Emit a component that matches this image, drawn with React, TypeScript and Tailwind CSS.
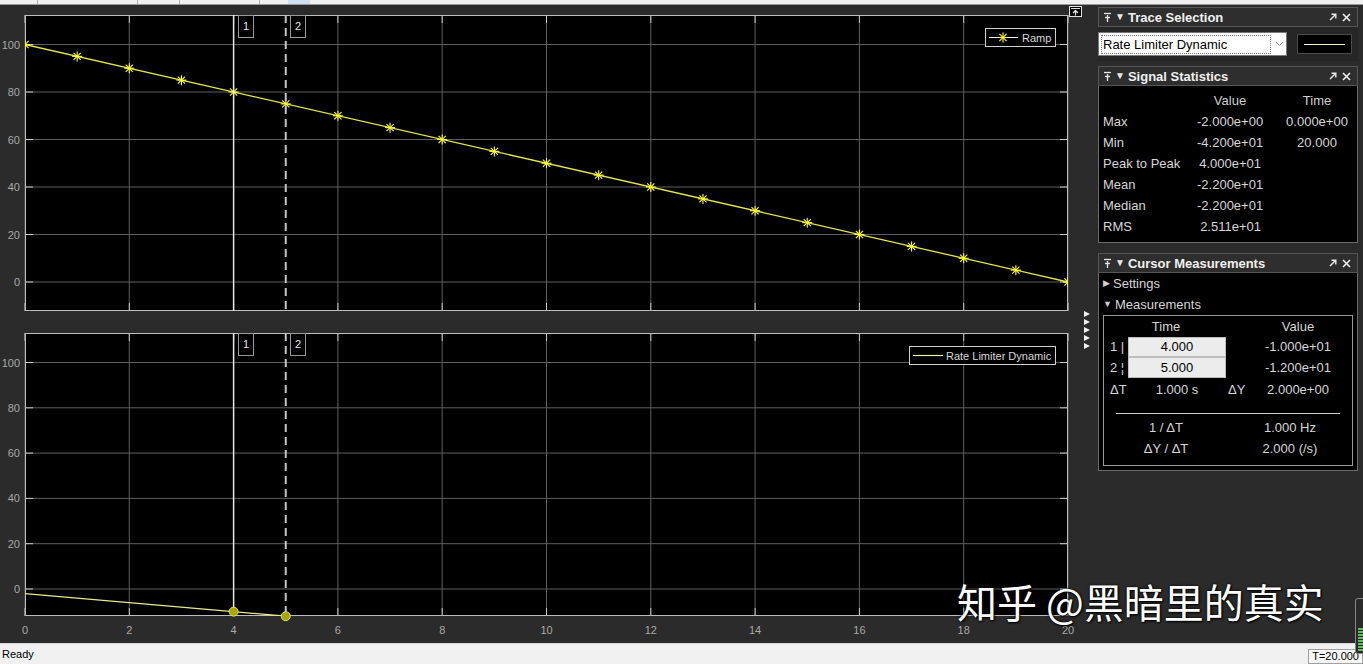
import type { ReactNode } from 'react';

const X0 = 25;
const X1 = 1068;
const xt = (t: number) => X0 + (t * (X1 - X0)) / 20;
const C1 = xt(4);
const C2 = xt(5);

interface PlotProps {
  id: string;
  vbTop: number;
  vbH: number;
  top: number;
  bottom: number;
  zeroY: number;
  scale: number;
  xLabels?: boolean;
  children: ReactNode;
}

function Asterisk({ x, y }: { x: number; y: number }) {
  const r = 5;
  const d = 3.6;
  return (
    <g stroke="#ffff33" strokeWidth={1.1}>
      <line x1={x - r} y1={y} x2={x + r} y2={y} />
      <line x1={x} y1={y - r} x2={x} y2={y + r} />
      <line x1={x - d} y1={y - d} x2={x + d} y2={y + d} />
      <line x1={x - d} y1={y + d} x2={x + d} y2={y - d} />
    </g>
  );
}

function Plot({ id, vbTop, vbH, top, bottom, zeroY, scale, xLabels, children }: PlotProps) {
  const yv = (v: number) => zeroY - v * scale;
  const yTicks = [0, 20, 40, 60, 80, 100];
  const xTicks = [0, 2, 4, 6, 8, 10, 12, 14, 16, 18, 20];
  return (
    <svg width={1082} height={vbH} viewBox={`0 ${vbTop} 1082 ${vbH}`} className="block">
      <defs>
        <clipPath id={id}>
          <rect x={X0} y={top} width={X1 - X0} height={bottom - top} />
        </clipPath>
      </defs>
      <rect x={X0} y={top} width={X1 - X0} height={bottom - top} fill="#000" />
      {/* grid */}
      {yTicks.map((v) => (
        <line key={'gy' + v} x1={X0} x2={X1} y1={yv(v)} y2={yv(v)} stroke="#5f5f5f" strokeWidth={1} />
      ))}
      {xTicks.map((t) => (
        <line key={'gx' + t} x1={xt(t)} x2={xt(t)} y1={top} y2={bottom} stroke="#5f5f5f" strokeWidth={1} />
      ))}
      {/* ticks */}
      {yTicks.map((v) => (
        <g key={'ty' + v} stroke="#c8c8c8">
          <line x1={X0} x2={X0 + 8} y1={yv(v)} y2={yv(v)} />
          <line x1={X1 - 8} x2={X1} y1={yv(v)} y2={yv(v)} />
        </g>
      ))}
      {xTicks.map((t) => (
        <g key={'tx' + t} stroke="#c8c8c8">
          <line x1={xt(t)} x2={xt(t)} y1={top} y2={top + 8} />
          <line x1={xt(t)} x2={xt(t)} y1={bottom - 8} y2={bottom} />
        </g>
      ))}
      <rect x={X0 + 0.5} y={top + 0.5} width={X1 - X0 - 1} height={bottom - top - 1} fill="none" stroke="#bdbdbd" strokeWidth={1} />
      {yTicks.map((v) => (
        <text key={'ly' + v} x={20} y={yv(v) + 4} textAnchor="end" fontSize={11} fill="#a9a9a9">
          {v}
        </text>
      ))}
      {xLabels &&
        xTicks.map((t) => (
          <text key={'lx' + t} x={xt(t)} y={bottom + 18} textAnchor="middle" fontSize={11} fill="#a9a9a9">
            {t}
          </text>
        ))}
      <g clipPath={`url(#${id})`}>{children}</g>
      {/* cursors */}
      <line x1={C1} x2={C1} y1={top} y2={bottom} stroke="#e6e6e6" strokeWidth={1.5} />
      <line x1={C2} x2={C2} y1={top} y2={bottom} stroke="#c4c4c4" strokeWidth={2} strokeDasharray="8 5" />
      <rect x={238.5} y={top + 0.5} width={15} height={22} fill="#000" stroke="#9a9a9a" />
      <text x={246} y={top + 15} textAnchor="middle" fontSize={11} fill="#e8e8e8">1</text>
      <rect x={290.5} y={top + 0.5} width={15} height={22} fill="#000" stroke="#9a9a9a" />
      <text x={298} y={top + 15} textAnchor="middle" fontSize={11} fill="#e8e8e8">2</text>
    </svg>
  );
}

function PinIcon() {
  return (
    <svg width="9" height="11" viewBox="0 0 9 11" className="block">
      <g stroke="#e8e8e8" strokeWidth="1.3" fill="none">
        <line x1="1" y1="1.5" x2="8" y2="1.5" />
        <line x1="4.5" y1="3" x2="4.5" y2="10" />
        <line x1="2" y1="5.5" x2="7" y2="5.5" />
      </g>
    </svg>
  );
}

function PanelHeader({ title }: { title: string }) {
  return (
    <div className="h-[20px] flex items-center border border-[#555] bg-[#2e2e2e] pl-[4px] pr-[6px]">
      <PinIcon />
      <span className="ml-[3px] text-[10px] text-[#e8e8e8] leading-none">▼</span>
      <span className="ml-[3px] text-[13px] font-bold text-[#f0f0f0] leading-none">{title}</span>
      <div className="ml-auto flex items-center gap-[5px] text-[#e8e8e8]">
        <svg width="8" height="8" viewBox="0 0 8 8" className="block">
          <g stroke="#e8e8e8" strokeWidth="1.4" fill="none">
            <line x1="1" y1="7" x2="6.5" y2="1.5" />
            <polyline points="2.5,1.2 6.8,1.2 6.8,5.5" />
          </g>
        </svg>
        <svg width="9" height="9" viewBox="0 0 9 9" className="block">
          <g stroke="#f0f0f0" strokeWidth="1.6">
            <line x1="1" y1="1" x2="8" y2="8" />
            <line x1="8" y1="1" x2="1" y2="8" />
          </g>
        </svg>
      </div>
    </div>
  );
}

const stats = [
  { label: 'Max', value: '-2.000e+00', time: '0.000e+00' },
  { label: 'Min', value: '-4.200e+01', time: '20.000' },
  { label: 'Peak to Peak', value: '4.000e+01', time: '' },
  { label: 'Mean', value: '-2.200e+01', time: '' },
  { label: 'Median', value: '-2.200e+01', time: '' },
  { label: 'RMS', value: '2.511e+01', time: '' },
];

export default function App() {
  return (
    <div className="w-[1363px] h-[664px] flex flex-col bg-[#2b2b2b] overflow-hidden relative font-['Liberation_Sans',Arial,sans-serif]">
      {/* toolbar remnant */}
      <div className="h-[5px] bg-[#f0f0f0] border-b border-[#9a9a9a] flex">
        <div className="w-[38px] border-r border-[#b0b0b0]" />
        <div className="w-[100px] border-r border-[#b0b0b0]" />
        <div className="w-[42px] border-r border-[#b0b0b0]" />
        <div className="w-[80px] border-r border-[#b0b0b0]" />
        <div className="w-[28px]" />
        <div className="w-[22px] bg-[#cfe0f3]" />
      </div>

      <div className="flex-1 flex">
        {/* plots */}
        <div className="w-[1082px] flex flex-col relative">
          <Plot id="c1" vbTop={5} vbH={317} top={15} bottom={311} zeroY={282} scale={2.375}>
            <line x1={xt(0)} y1={282 - 100 * 2.375} x2={xt(20)} y2={282} stroke="#e6e646" strokeWidth={1.3} />
            {Array.from({ length: 21 }, (_, i) => (
              <Asterisk key={i} x={xt(i)} y={282 - (100 - 5 * i) * 2.375} />
            ))}
          </Plot>
          <Plot id="c2" vbTop={322} vbH={321} top={333} bottom={616} zeroY={589} scale={2.265} xLabels>
            <line x1={xt(0)} y1={589 + 2 * 2.265} x2={xt(20)} y2={589 + 42 * 2.265} stroke="#eaea8a" strokeWidth={1.3} />
          </Plot>
          {/* legends and dots drawn on top */}
          <svg width={1082} height={638} viewBox="0 5 1082 638" className="absolute left-0 top-0 pointer-events-none">
            <circle cx={C1} cy={589 + 10 * 2.265} r={4.5} fill="#a8a800" stroke="#e0e070" strokeWidth={1} />
            <circle cx={C2} cy={589 + 12 * 2.265} r={4.5} fill="#a8a800" stroke="#e0e070" strokeWidth={1} />
            <rect x={985.5} y={28.5} width={70} height={18} fill="#000" stroke="#cfcfcf" />
            <line x1={989} x2={1018} y1={37.5} y2={37.5} stroke="#f2f2f2" strokeWidth={1} />
            <Asterisk x={1003} y={37.5} />
            <text x={1022} y={41.5} fontSize={11} fill="#d8d8d8">Ramp</text>
            <rect x={909.5} y={346.5} width={146} height={18} fill="#000" stroke="#cfcfcf" />
            <line x1={913} x2={943} y1={355.5} y2={355.5} stroke="#eeeea0" strokeWidth={1.2} />
            <text x={946} y={359.5} fontSize={11} fill="#d8d8d8">Rate Limiter Dynamic</text>
            {/* undock icon */}
            <rect x={1069.5} y={6.5} width={12} height={10} fill="#000" stroke="#e0e0e0" />
            <line x1={1071} x2={1080} y1={8.5} y2={8.5} stroke="#e0e0e0" />
            <path d="M1075.5 15.5 V10.5 M1073 13 L1075.5 10.5 L1078 13" stroke="#e0e0e0" fill="none" strokeWidth={1.3} />
          </svg>
        </div>

        {/* collapse arrows */}
        <div className="w-[16px] flex flex-col items-start justify-center pl-[2px] gap-[2px] pt-[12px]">
          {[0, 1, 2, 3, 4].map((i) => (
            <svg key={i} width="6" height="6" viewBox="0 0 6 6" className="block">
              <polygon points="0,0 6,3 0,6" fill="#f0f0f0" />
            </svg>
          ))}
        </div>

        {/* right panel */}
        <div className="w-[260px] flex flex-col pt-[2px] text-[13px] text-[#d6d6d6]">
          <PanelHeader title="Trace Selection" />
          <div className="h-[34px] flex items-center bg-[#262626]">
            <div className="w-[189px] h-[24px] bg-white border border-[#7a7a7a] flex items-center">
              <span className="ml-[2px] text-black text-[13px] border border-dotted border-[#777] px-[1px] leading-[17px] w-[170px]">
                Rate Limiter Dynamic
              </span>
              <div className="ml-auto w-[14px] h-full flex items-center justify-center">
                <svg width="9" height="6" viewBox="0 0 9 6" className="block">
                  <polyline points="1,1 4.5,4.5 8,1" stroke="#888" fill="none" strokeWidth="1" />
                </svg>
              </div>
            </div>
            <div className="ml-[10px] w-[55px] h-[20px] bg-black border border-[#4a4a4a] flex items-center justify-center">
              <div className="w-[41px] h-[1px] bg-[#f4f4c8]" />
            </div>
          </div>

          <div className="mt-[5px]">
            <PanelHeader title="Signal Statistics" />
          </div>
          <div className="h-[157px] bg-black border border-[#6a6a6a] border-t-0 pt-[4px] pl-[4px]">
            <div className="flex h-[21px] items-center">
              <span className="w-[94px]" />
              <span className="w-[66px] text-center text-[#cfcfcf]">Value</span>
              <span className="ml-[19px] w-[70px] text-center text-[#cfcfcf]">Time</span>
            </div>
            {stats.map((s) => (
              <div key={s.label} className="flex h-[21px] items-center">
                <span className="w-[94px]">{s.label}</span>
                <span className="w-[64px] text-right">{s.value}</span>
                <span className="ml-[21px] w-[70px] text-center">{s.time}</span>
              </div>
            ))}
          </div>

          <div className="mt-[10px]">
            <PanelHeader title="Cursor Measurements" />
          </div>
          <div className="h-[198px] bg-black border border-[#6a6a6a] border-t-0 px-[4px]">
            <div className="h-[21px] flex items-center gap-[3px]">
              <span className="text-[9px] text-[#cfcfcf]">▶</span>
              <span>Settings</span>
            </div>
            <div className="h-[21px] flex items-center gap-[3px]">
              <span className="text-[9px] text-[#cfcfcf]">▼</span>
              <span>Measurements</span>
            </div>
            <div className="h-[151px] border border-[#9a9a9a] pt-[1px] flex flex-col">
              <div className="h-[20px] flex items-center">
                <span className="w-[124px] text-center">Time</span>
                <span className="ml-[20px] w-[100px] text-center">Value</span>
              </div>
              <div className="h-[20px] flex items-center">
                <span className="w-[24px] pl-[6px]">1 |</span>
                <span className="w-[98px] h-[20px] bg-[#ececec] border border-[#bdbdbd] text-black text-center leading-[18px]">4.000</span>
                <span className="ml-[22px] w-[100px] text-center">-1.000e+01</span>
              </div>
              <div className="h-[21px] flex items-center">
                <span className="w-[24px] pl-[6px]">2 ¦</span>
                <span className="w-[98px] h-[21px] bg-[#ececec] border border-[#bdbdbd] text-black text-center leading-[19px]">5.000</span>
                <span className="ml-[22px] w-[100px] text-center">-1.200e+01</span>
              </div>
              <div className="h-[22px] flex items-center mt-[1px]">
                <span className="w-[24px] pl-[6px]">ΔT</span>
                <span className="w-[98px] text-center">1.000 s</span>
                <span className="w-[22px] pl-[2px]">ΔY</span>
                <span className="w-[100px] text-center">2.000e+00</span>
              </div>
              <div className="mx-[12px] mt-[12px] h-px bg-[#cfcfcf]" />
              <div className="h-[21px] mt-[3px] flex items-center">
                <span className="w-[124px] text-center">1 / ΔT</span>
                <span className="w-[124px] text-center">1.000 Hz</span>
              </div>
              <div className="h-[21px] flex items-center">
                <span className="w-[124px] text-center">ΔY / ΔT</span>
                <span className="w-[124px] text-center">2.000 (/s)</span>
              </div>
            </div>
          </div>
        </div>
      </div>

      {/* status bar */}
      <div className="h-[21px] bg-[#f0f0f0] border-t border-[#d8d8d8] flex items-center text-[11px] text-black">
        <span className="ml-[2px]">Ready</span>
        <span className="ml-auto mr-0 h-[15px] mt-[4px] px-[3px] bg-[#f7f7f7] border border-[#a0a0a0] leading-[13px]">T=20.000</span>
      </div>

      {/* meter at right edge */}
      <div className="absolute left-[1355px] top-[598px] w-[10px] h-[56px] rounded-l-[3px] border border-[#888] bg-[#2a2a2a] flex flex-col justify-end gap-[1px] pb-[2px] pl-[2px]">
        {Array.from({ length: 8 }, (_, i) => (
          <div key={i} className="h-[2px] bg-[#5fbf5f]" />
        ))}
      </div>

      {/* watermark */}
      <div className="absolute left-[957px] top-[581px] text-[40px] leading-none text-white font-['Noto_Sans_CJK_SC',sans-serif] [text-shadow:1px_1px_2px_#000,0_0_3px_#000] whitespace-nowrap">
        知乎 @黑暗里的真实
      </div>
    </div>
  );
}
